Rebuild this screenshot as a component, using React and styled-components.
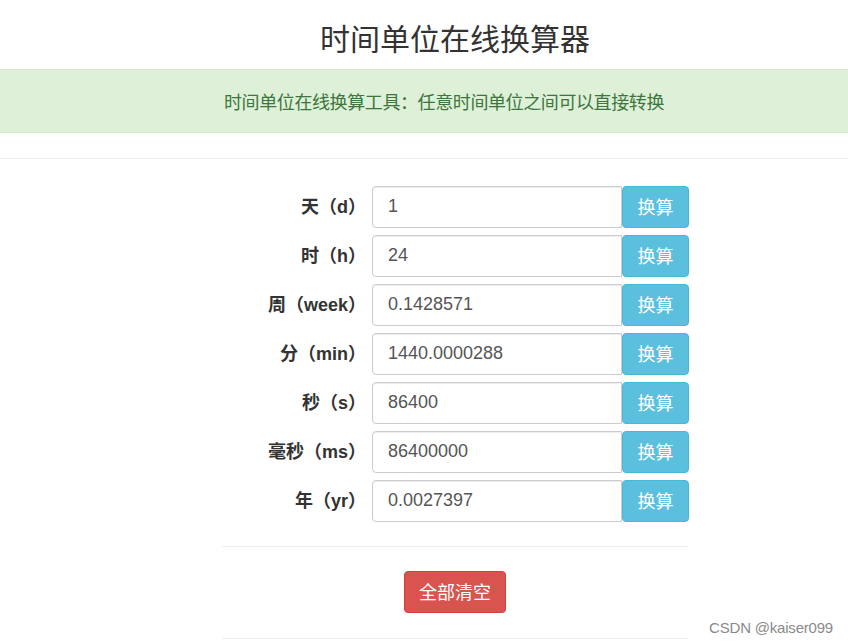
import React from "react";
import styled, { createGlobalStyle } from "styled-components";

const Global = createGlobalStyle`
  html, body { margin: 0; padding: 0; background: #fff; }
  body {
    font-family: "Liberation Sans", Arial, "Noto Sans CJK SC", sans-serif;
    color: #333;
    width: 848px;
    height: 642px;
    overflow: hidden;
  }
  * { box-sizing: border-box; }
`;

const Page = styled.div`
  width: 848px;
  height: 642px;
  position: relative;
  overflow: hidden;
`;

const Column = styled.div`
  width: 466px;
  margin-left: 222px;
`;

const Title = styled.h1`
  margin: 0;
  height: 69px;
  padding-top: 20px;
  font-size: 30px;
  font-weight: 400;
  line-height: 40px;
  text-align: center;
  color: #333;
  font-family: "Liberation Sans", Arial, "Noto Sans CJK SC", sans-serif;
`;

const Alert = styled.div`
  height: 64px;
  background: #dff0d8;
  border-top: 1px solid #d6e9c6;
  border-bottom: 1px solid #d6e9c6;
  color: #3c763d;
  font-size: 18px;
  letter-spacing: -0.4px;
  display: flex;
  align-items: center;
  padding-left: 224px;
  padding-bottom: 1px;
`;

const Rule = styled.hr`
  margin: 0;
  border: 0;
  border-top: 1px solid #eee;
  margin-top: ${(p) => p.$top}px;
`;

const Form = styled.div`
  display: flex;
  flex-direction: column;
  gap: 7px;
  padding-top: 27px;
  padding-bottom: 24px;
`;

const Row = styled.div`
  display: grid;
  grid-template-columns: 150px 250px 67px;
  height: 42px;
  align-items: center;
`;

const Label = styled.label`
  text-align: right;
  padding-right: 6px;
  padding-bottom: 4px;
  font-weight: 700;
  font-size: 18px;
  color: #333;
  white-space: nowrap;
`;

const Input = styled.input`
  width: 250px;
  height: 42px;
  border: 1px solid #ccc;
  border-radius: 4px 0 0 4px;
  padding: 0 15px 2px;
  font-size: 18px;
  color: #555;
  font-family: "Liberation Sans", Arial, sans-serif;
  box-shadow: inset 0 1px 1px rgba(0, 0, 0, 0.075);
  outline: none;
`;

const ConvertButton = styled.button`
  width: 67px;
  height: 42px;
  border: 1px solid #46b8da;
  background: #5bc0de;
  color: #fff;
  border-radius: 4px;
  font-size: 18px;
  font-family: "Liberation Sans", Arial, "Noto Sans CJK SC", sans-serif;
  padding: 0 0 3px;
  cursor: pointer;
`;

const ClearWrap = styled.div`
  display: flex;
  justify-content: center;
  padding: 24px 0 25px;
`;

const ClearButton = styled.button`
  width: 102px;
  height: 42px;
  background: #d9534f;
  border: 1px solid #d43f3a;
  border-radius: 4px;
  color: #fff;
  font-size: 18px;
  font-family: "Liberation Sans", Arial, "Noto Sans CJK SC", sans-serif;
  padding: 0 0 3px;
`;

const Watermark = styled.div`
  position: absolute;
  right: 15px;
  bottom: 6px;
  font-size: 15px;
  letter-spacing: -0.2px;
  color: #8a8a8a;
  font-family: "Liberation Sans", Arial, sans-serif;
`;

const rows = [
  ["天（d）", "1"],
  ["时（h）", "24"],
  ["周（week）", "0.1428571"],
  ["分（min）", "1440.0000288"],
  ["秒（s）", "86400"],
  ["毫秒（ms）", "86400000"],
  ["年（yr）", "0.0027397"],
];

export default function App() {
  return (
    <Page>
      <Global />
      <Column>
        <Title>时间单位在线换算器</Title>
      </Column>
      <Alert>时间单位在线换算工具：任意时间单位之间可以直接转换</Alert>
      <Rule $top={25} />
      <Column>
        <Form>
          {rows.map(([label, value]) => (
            <Row key={label}>
              <Label>{label}</Label>
              <Input defaultValue={value} />
              <ConvertButton>换算</ConvertButton>
            </Row>
          ))}
        </Form>
        <Rule $top={0} />
        <ClearWrap>
          <ClearButton>全部清空</ClearButton>
        </ClearWrap>
        <Rule $top={0} />
      </Column>
      <Watermark>CSDN @kaiser099</Watermark>
    </Page>
  );
}
